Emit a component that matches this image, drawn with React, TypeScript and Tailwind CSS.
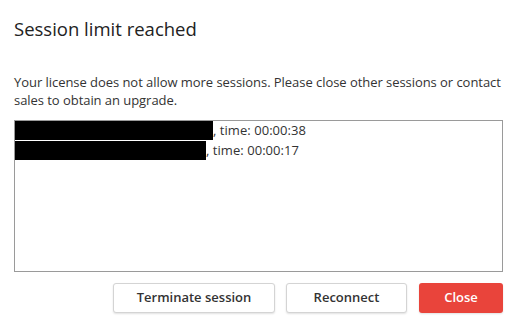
export default function App() {
  const font = { fontFamily: '"Open Sans", "Noto Sans", sans-serif' };

  // STYLES
  const buttonBaseClass =
    "h-[30px] rounded-[3px] text-[13px] font-semibold flex items-center justify-center shadow-[0_1px_2px_rgba(0,0,0,0.12)]";
  const secondaryButtonClass = `${buttonBaseClass} bg-white border border-[#d4d4d4] text-[#333]`;
  const primaryButtonClass = `${buttonBaseClass} bg-[#e9443b] text-white`;

  const sessions = [
    { redactWidth: "w-[198px]", time: "00:00:38" },
    { redactWidth: "w-[191px]", time: "00:00:17" },
  ];

  return (
    <div
      className="w-[529px] h-[329px] bg-white pl-[14px] pr-[26px] pt-[16px] text-[#333]"
      style={font}
    >
      {/* TITRE */}
      <h1 className="text-[18.5px] leading-[26px] text-[#222]">Session limit reached</h1>

      {/* MESSAGE */}
      <p className="mt-[31px] w-[505px] text-[13px] leading-[18px] tracking-[-0.05px]">
        Your license does not allow more sessions. Please close other sessions or contact sales to
        obtain an upgrade.
      </p>

      {/* LISTE DES SESSIONS */}
      <div className="mt-[11px] h-[152px] w-[489px] border border-[#9a9a9a]">
        {sessions.map((s, i) => (
          <div key={i} className="flex h-[20px] items-start text-[13px] leading-[19px] tracking-[0.05px]">
            <span className={`${s.redactWidth} h-[19px] bg-black shrink-0`} />
            <span>, time: {s.time}</span>
          </div>
        ))}
      </div>

      {/* ACTIONS */}
      <div className="mt-[11px] flex justify-end">
        <button className={`${secondaryButtonClass} w-[162px]`}>Terminate session</button>
        <button className={`${secondaryButtonClass} w-[121px] ml-[11px]`}>Reconnect</button>
        <button className={`${primaryButtonClass} w-[84px] ml-[12px]`}>Close</button>
      </div>
    </div>
  );
}
